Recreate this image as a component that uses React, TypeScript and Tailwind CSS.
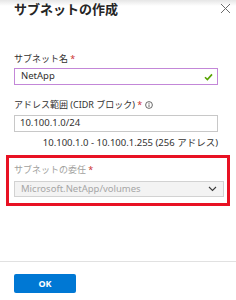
import React from "react";

const font = { fontFamily: '"Noto Sans", "Noto Sans CJK JP", sans-serif' };

export default function App() {
  return (
    <div
      className="fixed inset-0 overflow-hidden bg-white text-[#323130]"
      style={font}
    >
      <div className="absolute left-0 top-0 w-full h-[6px] bg-gradient-to-b from-[#e6e6e6] to-white" />
      <div className="relative flex items-start justify-between pl-[14px] pr-[5px]">
        <div className="text-[13px] leading-[18px] font-bold text-[#252525]">
          サブネットの作成
        </div>
        <svg width="11" height="11" viewBox="0 0 11 11" className="mt-[3px]">
          <path d="M1 1 L10 10 M10 1 L1 10" stroke="#6b6b6b" strokeWidth="1" fill="none" />
        </svg>
      </div>

      <div className="mt-[35px] pl-[14px] pr-[18px] flex flex-col">
        <div className="text-[9px] leading-[12px] text-[#323130]">
          サブネット名 <span className="text-[#c33]">*</span>
        </div>
        <div className="mt-[3px] h-[17px] border border-[#c387d8] flex items-center justify-between pl-[6px] pr-[4px]">
          <span className="text-[9.5px] text-[#323130]">NetApp</span>
          <svg width="9" height="8" viewBox="0 0 9 8">
            <path d="M1 4.2 L3.4 6.6 L8 1.4" stroke="#57a300" strokeWidth="1.6" fill="none" />
          </svg>
        </div>

        <div className="mt-[14px] text-[9px] leading-[12px] text-[#323130] flex items-center">
          <span>アドレス範囲 (CIDR ブロック) <span className="text-[#c33]">*</span></span>
          <svg width="8" height="8" viewBox="0 0 8 8" className="ml-[3px]">
            <circle cx="4" cy="4" r="3.4" stroke="#444" strokeWidth="0.8" fill="none" />
            <path d="M4 3.4 V6" stroke="#444" strokeWidth="0.8" />
            <circle cx="4" cy="2.3" r="0.5" fill="#444" />
          </svg>
        </div>
        <div className="mt-[4px] h-[17px] border border-[#c8c8c8] flex items-center pl-[5px]">
          <span className="text-[9.5px] text-[#323130]">10.100.1.0/24</span>
        </div>
        <div className="mt-[5px] text-right text-[9.5px] leading-[12px] text-[#323130]">
          10.100.1.0 - 10.100.1.255 (256 アドレス)
        </div>
      </div>

      <div className="mt-[6px] mx-[6px] h-[51px] border-[3px] border-[#e81123] pt-[6px] pl-[5px] pr-[3px]">
        <div className="text-[9px] leading-[12px] text-[#a19f9d]">
          サブネットの委任 <span className="text-[#c33]">*</span>
        </div>
        <div className="mt-[5px] h-[16px] border border-[#d2d2d2] bg-[#f3f3f3] flex items-center justify-between pl-[6px] pr-[6px]">
          <span className="text-[9.5px] text-[#a6a6a6]">Microsoft.NetApp/volumes</span>
          <svg width="9" height="6" viewBox="0 0 9 6">
            <path d="M1 1 L4.5 4.5 L8 1" stroke="#3a3a3a" strokeWidth="1.1" fill="none" />
          </svg>
        </div>
      </div>

      <div className="mt-[55px] h-px bg-[#e1e1e1]" />
      <div className="pl-[14px] pt-[12px]">
        <div className="w-[62px] h-[19px] bg-[#0078d4] rounded-[2px] flex items-center justify-center text-white text-[9px] font-bold">
          OK
        </div>
      </div>
    </div>
  );
}
